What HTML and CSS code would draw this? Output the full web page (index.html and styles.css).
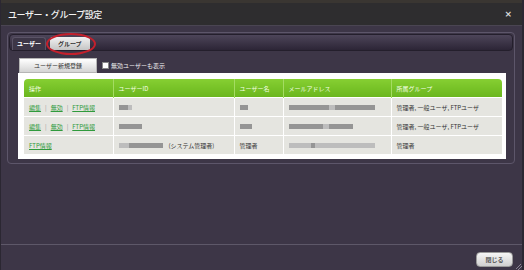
FILE: index.html
```html
<!DOCTYPE html>
<html lang="ja">
<head>
<meta charset="utf-8">
<title>ユーザー・グループ設定</title>
<link rel="stylesheet" href="styles.css">
</head>
<body>
<div class="dialog">
  <div class="topstrip"></div>
  <div class="titlebar">
    <span class="title">ユーザー・グループ設定</span>
    <span class="close">×</span>
  </div>
  <div class="content">
    <div class="tabs">
      <div class="tabbar">
        <span class="tab active">ユーザー</span>
        <span class="tab">グループ</span>
        <span class="ring"></span>
      </div>
      <div class="panel">
        <div class="toolbar">
          <button class="btn">ユーザー新規登録</button>
          <label class="check"><span class="box"></span>無効ユーザーも表示</label>
        </div>
        <div class="sheet">
          <table class="grid">
            <colgroup>
              <col class="c1"><col class="c2"><col class="c3"><col class="c4"><col class="c5">
            </colgroup>
            <thead>
              <tr><th>操作</th><th>ユーザーID</th><th>ユーザー名</th><th>メールアドレス</th><th>所属グループ</th></tr>
            </thead>
            <tbody>
              <tr>
                <td><a href="#">編集</a><i>|</i><a href="#">無効</a><i>|</i><a href="#">FTP情報</a></td>
                <td><span class="blur" style="width:9px"></span><span class="blur light" style="width:4px"></span></td>
                <td><span class="blur" style="width:8px"></span></td>
                <td><span class="blur" style="width:40px"></span><span class="blur light" style="width:6px"></span><span class="blur" style="width:40px"></span></td>
                <td>管理者, 一般ユーザ, FTPユーザ</td>
              </tr>
              <tr>
                <td><a href="#">編集</a><i>|</i><a href="#">無効</a><i>|</i><a href="#">FTP情報</a></td>
                <td><span class="blur" style="width:23px"></span></td>
                <td><span class="blur" style="width:12px"></span></td>
                <td><span class="blur" style="width:34px"></span><span class="blur light" style="width:6px"></span><span class="blur" style="width:24px"></span></td>
                <td>管理者, 一般ユーザ, FTPユーザ</td>
              </tr>
              <tr>
                <td><a href="#">FTP情報</a></td>
                <td><span class="blur light" style="width:10px"></span><span class="blur" style="width:34px"></span><span class="note">(システム管理者)</span></td>
                <td>管理者</td>
                <td><span class="blur light" style="width:22px"></span><span class="blur" style="width:4px"></span><span class="blur light" style="width:60px"></span></td>
                <td>管理者</td>
              </tr>
            </tbody>
          </table>
        </div>
      </div>
    </div>
  </div>
  <div class="footer">
    <button class="btn close-btn">閉じる</button>
    <span class="grip"></span>
  </div>
</div>
</body>
</html>
```
FILE: styles.css
```css
html, body {
  margin: 0;
  padding: 0;
}
body {
  width: 524px;
  height: 270px;
  overflow: hidden;
  background: #3d3647;
  font-family: "Noto Sans CJK JP", "Noto Sans", sans-serif;
}
.dialog {
  position: relative;
  width: 524px;
  height: 270px;
  display: flex;
  flex-direction: column;
  background: #3d3647;
  box-sizing: border-box;
  border-left: 1px solid #2b2732;
  border-right: 2px solid #2b2732;
}
.topstrip {
  height: 3px;
  background: #3a3632;
}
.titlebar {
  height: 22px;
  background: #2e2d2f;
  display: flex;
  align-items: center;
  justify-content: space-between;
  padding: 0 10px 0 7px;
  color: #f2f2f2;
  border-bottom: 1px solid #4a4552;
}
.title {
  font-size: 9px;
  font-weight: 500;
  letter-spacing: -0.4px;
}
.close {
  font-family: "DejaVu Sans", sans-serif;
  font-size: 9px;
  font-weight: bold;
  color: #d8d8d8;
}
.content {
  flex: 1;
  padding: 6px 7px 0 6px;
}
.tabs {
  border: 1px solid #5d566a;
  border-radius: 4px;
  padding: 1px;
  height: 132px;
  box-sizing: border-box;
}
.tabbar {
  position: relative;
  height: 17px;
  border-radius: 4px;
  background: linear-gradient(#4d4559, #2c2536);
  border: 1px solid #241f2c;
  box-sizing: border-box;
  display: flex;
  align-items: flex-end;
  gap: 4px;
  padding-left: 2px;
}
.tab {
  font-size: 6px;
  font-weight: bold;
  height: 13px;
  line-height: 13px;
  padding: 0 8px;
  border-radius: 3px 3px 0 0;
  color: #333;
  background: linear-gradient(#f2f2f2, #c4c4c4);
}
.tab.active {
  color: #fff;
  background: #3d3647;
  border: 1px solid #5a5366;
  border-bottom: none;
  height: 12px;
  line-height: 12px;
  padding: 0 4px;
}
.ring {
  position: absolute;
  left: 36px;
  top: -2px;
  width: 46px;
  height: 18px;
  border: 2px solid #c4202c;
  border-radius: 50%;
}
.panel {
  padding: 7px 7px 0 9px;
}
.toolbar {
  display: flex;
  align-items: center;
  gap: 5px;
  height: 15px;
}
.btn {
  font-family: inherit;
  font-size: 6px;
  color: #333;
  border: 1px solid #b5b5b5;
  background: linear-gradient(#ffffff, #d4d4d4);
  height: 15px;
  padding: 0;
  width: 78px;
  margin-left: 1px;
}
.check {
  display: flex;
  align-items: center;
  gap: 2px;
  color: #f0f0f0;
  font-size: 6px;
}
.box {
  width: 5px;
  height: 5px;
  background: #fff;
  border: 1px solid #888;
}
.sheet {
  background: #fff;
  padding: 6px 6px 5px 6px;
}
.grid {
  width: 100%;
  border-collapse: collapse;
  table-layout: fixed;
  font-size: 6px;
}
.c1 { width: 89px; }
.c2 { width: 121px; }
.c3 { width: 49px; }
.c4 { width: 108px; }
.c5 { width: 111px; }
.grid th {
  height: 18px;
  padding: 0 5px;
  text-align: left;
  font-weight: normal;
  color: #f4ffe6;
  background: linear-gradient(#86cf32, #6ab61e);
  border-left: 1px solid #a4dc62;
}
.grid th:first-child {
  border-left: none;
  border-top-left-radius: 4px;
}
.grid th:last-child {
  border-top-right-radius: 4px;
}
.grid td {
  height: 18px;
  padding: 0 5px;
  background: #e5e5e0;
  color: #333;
  border-top: 1px solid #fff;
  border-left: 1px solid #fff;
  white-space: nowrap;
}
.grid td:first-child {
  border-left: none;
}
.grid a {
  color: #2f9a3c;
}
.grid i {
  font-style: normal;
  color: #9a9a9a;
  margin: 0 4px;
}
.blur {
  display: inline-block;
  height: 5px;
  background: #959595;
  filter: blur(0.7px);
  vertical-align: middle;
}
.blur.light {
  background: #bdbdbd;
}
.note {
  margin-left: 6px;
  color: #333;
}
.footer {
  position: relative;
  height: 25px;
  border-top: 1px solid #5e5869;
  display: flex;
  justify-content: flex-end;
  align-items: center;
  padding-right: 9px;
}
.close-btn {
  width: 37px;
  height: 15px;
  border-radius: 4px;
  border: 1px solid #9a9a9a;
  color: #555;
  font-weight: bold;
  background: linear-gradient(#f6f6f6, #cfcfcf);
  margin-top: 3px;
}
.grip {
  position: absolute;
  right: 0;
  bottom: 0;
  width: 6px;
  height: 6px;
  background: linear-gradient(135deg, transparent 40%, #8a8494 40%, #8a8494 50%, transparent 50%, transparent 65%, #8a8494 65%, #8a8494 75%, transparent 75%);
}
```
